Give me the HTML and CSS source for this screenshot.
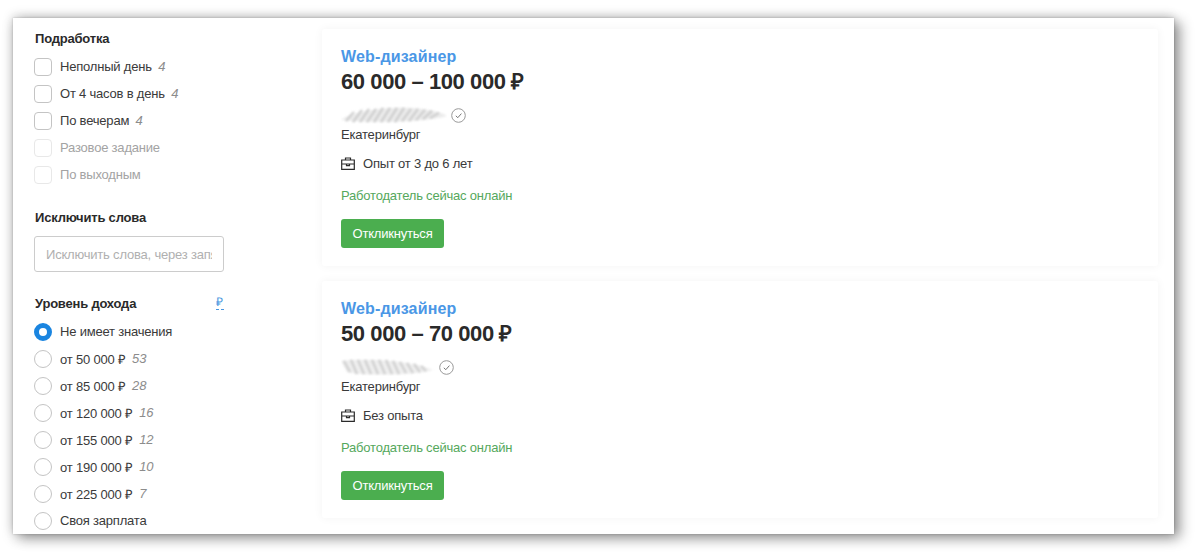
FILE: index.html
```html
<!DOCTYPE html>
<html lang="ru">
<head>
<meta charset="UTF-8">
<title>Вакансии</title>
<link rel="stylesheet" href="styles.css">
</head>
<body>
<div class="window">
    <aside class="filters">
        <h3 class="filter-title">Подработка</h3>
        <ul class="options">
            <li class="option"><span class="box"></span>Неполный день <i class="count">4</i></li>
            <li class="option"><span class="box"></span>От 4 часов в день <i class="count">4</i></li>
            <li class="option"><span class="box"></span>По вечерам <i class="count">4</i></li>
            <li class="option off"><span class="box"></span>Разовое задание</li>
            <li class="option off"><span class="box"></span>По выходным</li>
        </ul>

        <h3 class="filter-title words-title">Исключить слова</h3>
        <input class="words-input" type="text" placeholder="Исключить слова, через запятую">

        <div class="income-head">
            <h3 class="filter-title">Уровень дохода</h3>
            <span class="currency">₽</span>
        </div>
        <ul class="options">
            <li class="option"><span class="radio checked"></span>Не имеет значения</li>
            <li class="option"><span class="radio"></span>от 50 000 ₽ <i class="count">53</i></li>
            <li class="option"><span class="radio"></span>от 85 000 ₽ <i class="count">28</i></li>
            <li class="option"><span class="radio"></span>от 120 000 ₽ <i class="count">16</i></li>
            <li class="option"><span class="radio"></span>от 155 000 ₽ <i class="count">12</i></li>
            <li class="option"><span class="radio"></span>от 190 000 ₽ <i class="count">10</i></li>
            <li class="option"><span class="radio"></span>от 225 000 ₽ <i class="count">7</i></li>
            <li class="option"><span class="radio"></span>Своя зарплата</li>
        </ul>
    </aside>

    <main class="results">
        <section class="card">
            <a class="job-title">Web-дизайнер</a>
            <div class="salary">60 000 – 100 000 ₽</div>
            <div class="company">
                <svg class="smudge" width="106" height="18" viewBox="0 0 106 18">
                    <defs><filter id="soft" x="-5%" y="-20%" width="110%" height="140%"><feGaussianBlur stdDeviation="1.1"/></filter></defs>
                    <path d="M0 14 C12 6 40 1 70 2 C88 3 100 6 106 10 C92 15 40 18 0 14 Z" fill="#ececec" filter="url(#soft)"/>
                    <g filter="url(#soft)" stroke="#cfcfcf" stroke-width="2.4" fill="none">
                        <path d="M5 15 L13 6 M12 16 L21 4 M19 16 L28 3 M26 16 L35 3 M33 16 L42 2 M40 16 L49 2 M47 16 L56 2 M54 16 L63 2 M61 15 L70 3 M68 15 L77 3 M75 14 L84 4 M82 13 L91 5 M89 12 L98 7"/>
                    </g>
                </svg>
                <svg class="check" width="15" height="15" viewBox="0 0 15 15">
                    <circle cx="7.5" cy="7.5" r="6.8" fill="none" stroke="#999" stroke-width="1"/>
                    <path d="M4.8 7.8 L6.8 9.7 L10.4 5.6" fill="none" stroke="#777" stroke-width="1"/>
                </svg>
            </div>
            <div class="city">Екатеринбург</div>
            <div class="experience">
                <svg width="14" height="13" viewBox="0 0 14 13">
                    <path d="M4.5 3 V1 H9.5 V3 M.7 3 H13.3 V12.3 H.7 Z M.7 7 H13.3 M5.5 7 V8.6 H8.5 V7" fill="none" stroke="#2a2a2a" stroke-width="1.2"/>
                </svg>
                Опыт от 3 до 6 лет
            </div>
            <div class="online">Работодатель сейчас онлайн</div>
            <button class="respond">Откликнуться</button>
        </section>

        <section class="card">
            <a class="job-title">Web-дизайнер</a>
            <div class="salary">50 000 – 70 000 ₽</div>
            <div class="company">
                <svg class="smudge" width="94" height="18" viewBox="0 0 94 18">
                    <path d="M0 3 C20 0 70 2 92 12 C70 18 20 18 6 14 Z" fill="#efefef" filter="url(#soft)"/>
                    <g filter="url(#soft)" stroke="#d0d0d0" stroke-width="2.4" fill="none">
                        <path d="M3 3 L9 14 M10 2 L16 16 M17 2 L23 16 M24 2 L30 16 M31 2 L37 16 M38 2 L44 16 M45 2 L51 16 M52 3 L58 16 M59 4 L65 15 M66 5 L72 15 M73 6 L79 14 M80 8 L85 13"/>
                    </g>
                </svg>
                <svg class="check" width="15" height="15" viewBox="0 0 15 15">
                    <circle cx="7.5" cy="7.5" r="6.8" fill="none" stroke="#999" stroke-width="1"/>
                    <path d="M4.8 7.8 L6.8 9.7 L10.4 5.6" fill="none" stroke="#777" stroke-width="1"/>
                </svg>
            </div>
            <div class="city">Екатеринбург</div>
            <div class="experience">
                <svg width="14" height="13" viewBox="0 0 14 13">
                    <path d="M4.5 3 V1 H9.5 V3 M.7 3 H13.3 V12.3 H.7 Z M.7 7 H13.3 M5.5 7 V8.6 H8.5 V7" fill="none" stroke="#2a2a2a" stroke-width="1.2"/>
                </svg>
                Без опыта
            </div>
            <div class="online">Работодатель сейчас онлайн</div>
            <button class="respond">Откликнуться</button>
        </section>
    </main>
</div>
</body>
</html>
```

FILE: styles.css
```css
html, body {
    height: 100%;
}
body {
    margin: 0;
    background-color: #fff;
    font-family: "Liberation Sans", Arial, sans-serif;
    font-size: 13px;
    letter-spacing: -0.2px;
    color: #3a3a3a;
    overflow: hidden;
}
.window {
    display: flex;
    box-sizing: border-box;
    width: 1161px;
    height: 516px;
    margin: 18px 0 0 13px;
    background-color: #fff;
    overflow: hidden;
    box-shadow: 0 0 2px rgba(0, 0, 0, 0.2), 7px 4px 12px rgba(0, 0, 0, 0.32), 0 5px 12px rgba(0, 0, 0, 0.14), -1px -3px 10px rgba(0, 0, 0, 0.14);
}
.filters {
    flex: none;
    box-sizing: border-box;
    width: 309px;
    padding: 13px 98px 0 21px;
}
.filter-title {
    margin: 0;
    padding-left: 1px;
    font-size: 13px;
    line-height: 15px;
    font-weight: bold;
    color: #2a2a2a;
}
.options {
    list-style: none;
    margin: 0;
    padding: 0;
}
.option {
    display: flex;
    align-items: center;
    height: 27px;
    white-space: pre;
}
.option.off {
    color: #a3a3a3;
}
.filter-title + .options {
    margin-top: 7px;
}
.box, .radio {
    flex: none;
    box-sizing: border-box;
    width: 18px;
    height: 18px;
    margin-right: 8px;
    border: 1px solid #c4c4c4;
    background-color: #fff;
}
.box {
    border-radius: 4px;
}
.off .box {
    border-color: #e8e8e8;
}
.radio {
    border-radius: 50%;
}
.radio.checked {
    border: 5px solid #1a85e0;
}
.count {
    margin-left: 3px;
    color: #8c8c8c;
}
.words-title {
    margin-top: 22px;
}
.words-input {
    display: block;
    box-sizing: border-box;
    width: 190px;
    height: 36px;
    margin-top: 11px;
    padding: 0 11px;
    border: 1px solid #ccc;
    border-radius: 3px;
    font: inherit;
    letter-spacing: inherit;
    color: #303030;
}
.words-input::placeholder {
    color: #b0b0b0;
}
.income-head {
    display: flex;
    justify-content: space-between;
    align-items: flex-start;
    height: 15px;
    margin-top: 24px;
}
.income-head + .options {
    margin-top: 7px;
}
.currency {
    position: relative;
    width: 8px;
    height: 16px;
    margin-top: -1px;
    font-size: 12px;
    line-height: 15px;
    color: #4a97e0;
    overflow: hidden;
}
.currency::after {
    content: "";
    position: absolute;
    left: 0;
    right: 0;
    top: 14px;
    border-top: 1px dashed #4a97e0;
}
.results {
    flex: 1;
    padding: 11px 16px 0 0;
}
.card {
    box-sizing: border-box;
    height: 237px;
    margin-bottom: 15px;
    padding: 18px 19px 0;
    background-color: #fff;
    border-radius: 3px;
    box-shadow: 0 0 10px rgba(0, 0, 0, 0.05);
}
.job-title {
    display: block;
    font-size: 16px;
    line-height: 19px;
    font-weight: bold;
    letter-spacing: 0.15px;
    color: #4a97e6;
}
.salary {
    margin-top: 3px;
    font-size: 22px;
    line-height: 25px;
    font-weight: bold;
    letter-spacing: -0.42px;
    color: #2a2a2a;
}
.company {
    display: flex;
    align-items: center;
    height: 18px;
    margin-top: 12px;
}
.smudge {
    margin-right: 4px;
}
.city {
    line-height: 15px;
    margin-top: 3px;
}
.experience {
    display: flex;
    align-items: center;
    gap: 8px;
    height: 15px;
    margin-top: 14px;
}
.online {
    margin-top: 17px;
    line-height: 15px;
    color: #55a85c;
}
.respond {
    display: block;
    width: 103px;
    height: 29px;
    margin-top: 16px;
    padding: 0;
    border: 0;
    border-radius: 3px;
    background-color: #4bae4f;
    color: #fff;
    font: inherit;
    letter-spacing: inherit;
}
```
